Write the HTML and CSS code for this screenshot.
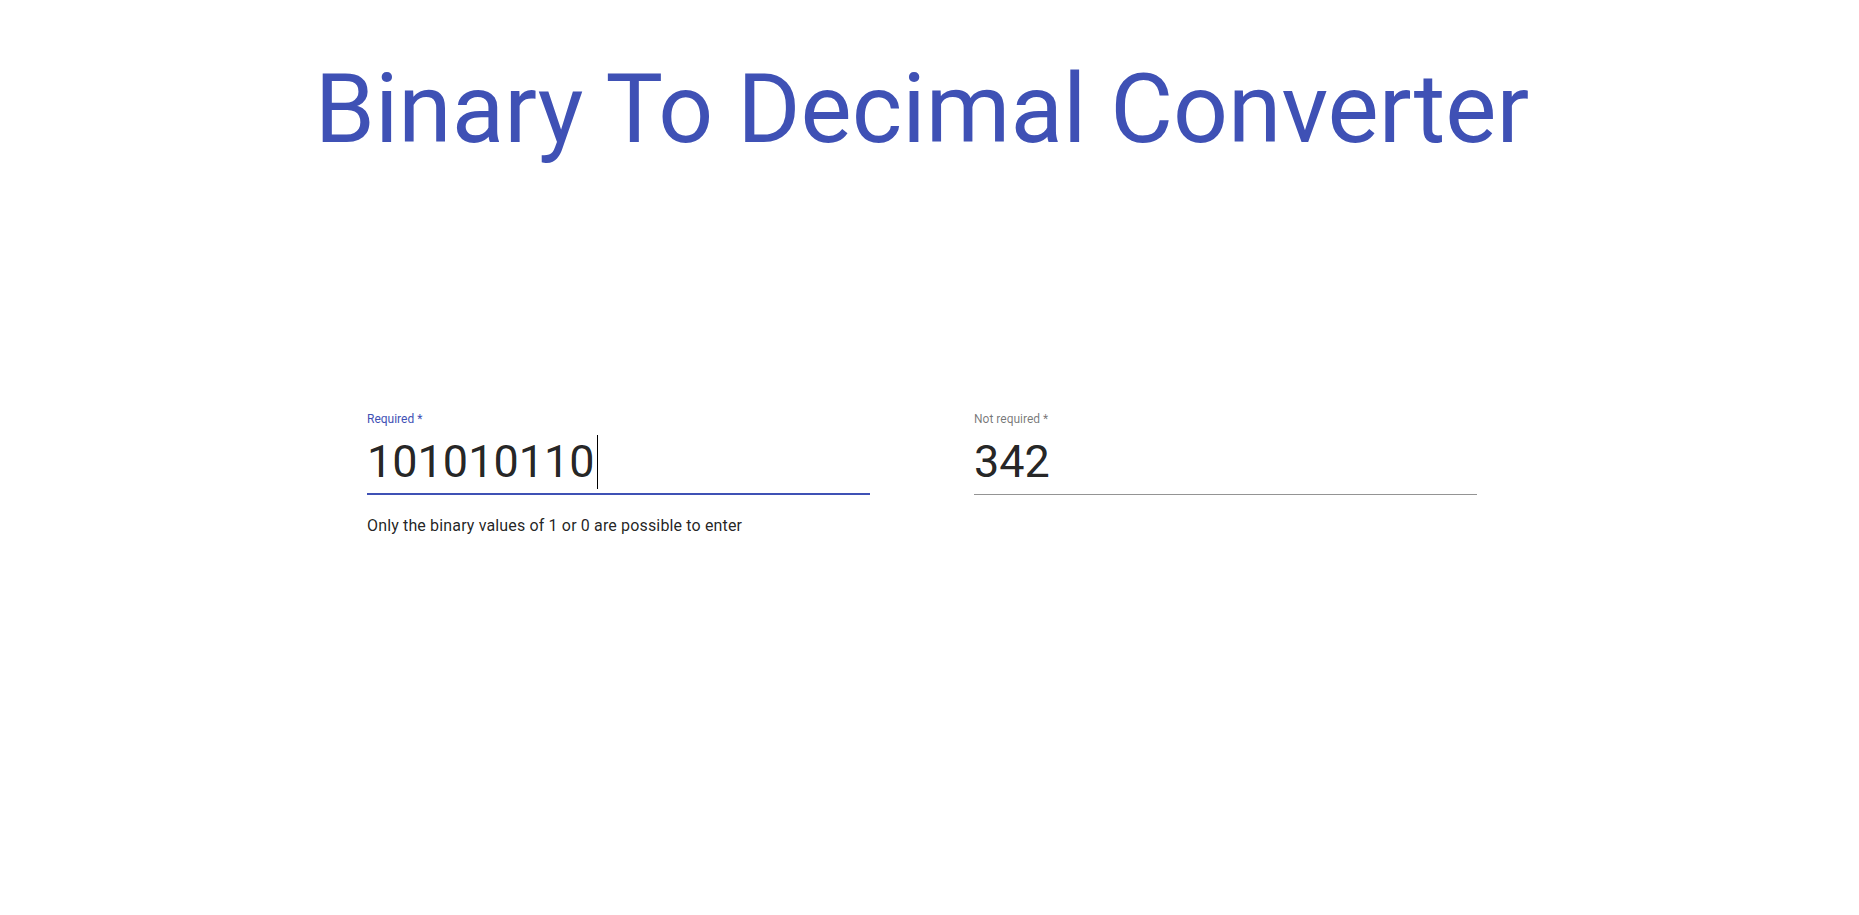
FILE: index.html
```html
<!DOCTYPE html>
<html lang="en">
<head>
<meta charset="utf-8">
<title>Binary To Decimal Converter</title>
<link rel="stylesheet" href="styles.css">
</head>
<body>
<main class="page">
  <h1 class="title">Binary To Decimal Converter</h1>
  <section class="fields">
    <div class="field field-focused">
      <label class="field-label">Required *</label>
      <div class="field-input"><span class="field-value">101010110</span><span class="caret"></span></div>
      <div class="field-hint">Only the binary values of 1 or 0 are possible to enter</div>
    </div>
    <div class="field">
      <label class="field-label">Not required *</label>
      <div class="field-input"><span class="field-value">342</span></div>
    </div>
  </section>
</main>
</body>
</html>
```

FILE: styles.css
```css
html, body {
  margin: 0;
  padding: 0;
  background: #ffffff;
}

body {
  font-family: Roboto, "Liberation Sans", Arial, sans-serif;
  color: rgba(0, 0, 0, 0.87);
}

.page {
  padding-right: 15px;
  display: flex;
  flex-direction: column;
  align-items: center;
}

.title {
  margin: 53px 0 0 0;
  font-size: 96.5px;
  line-height: 112px;
  font-weight: 400;
  color: #3f51b5;
  text-align: center;
}

.fields {
  width: 1110px;
  margin-top: 247px;
  display: flex;
  justify-content: space-between;
}

.field {
  width: 503px;
  display: flex;
  flex-direction: column;
}

.field-label {
  font-size: 12px;
  line-height: 14px;
  color: rgba(0, 0, 0, 0.54);
}

.field-focused .field-label {
  color: #3f51b5;
}

.field-input {
  margin-top: 10px;
  display: flex;
  align-items: center;
  height: 52px;
  padding-bottom: 6px;
  border-bottom: 1px solid rgba(0, 0, 0, 0.42);
}

.field-focused .field-input {
  padding-bottom: 5px;
  border-bottom: 2px solid #3f51b5;
}

.field-value {
  font-size: 45px;
  line-height: 52px;
  color: rgba(0, 0, 0, 0.87);
}

.caret {
  width: 1px;
  height: 54px;
  margin-left: 2px;
  background: #000000;
}

.field-hint {
  margin-top: 21px;
  font-size: 16px;
  letter-spacing: 0.15px;
  line-height: 20px;
  color: rgba(0, 0, 0, 0.87);
}
```
